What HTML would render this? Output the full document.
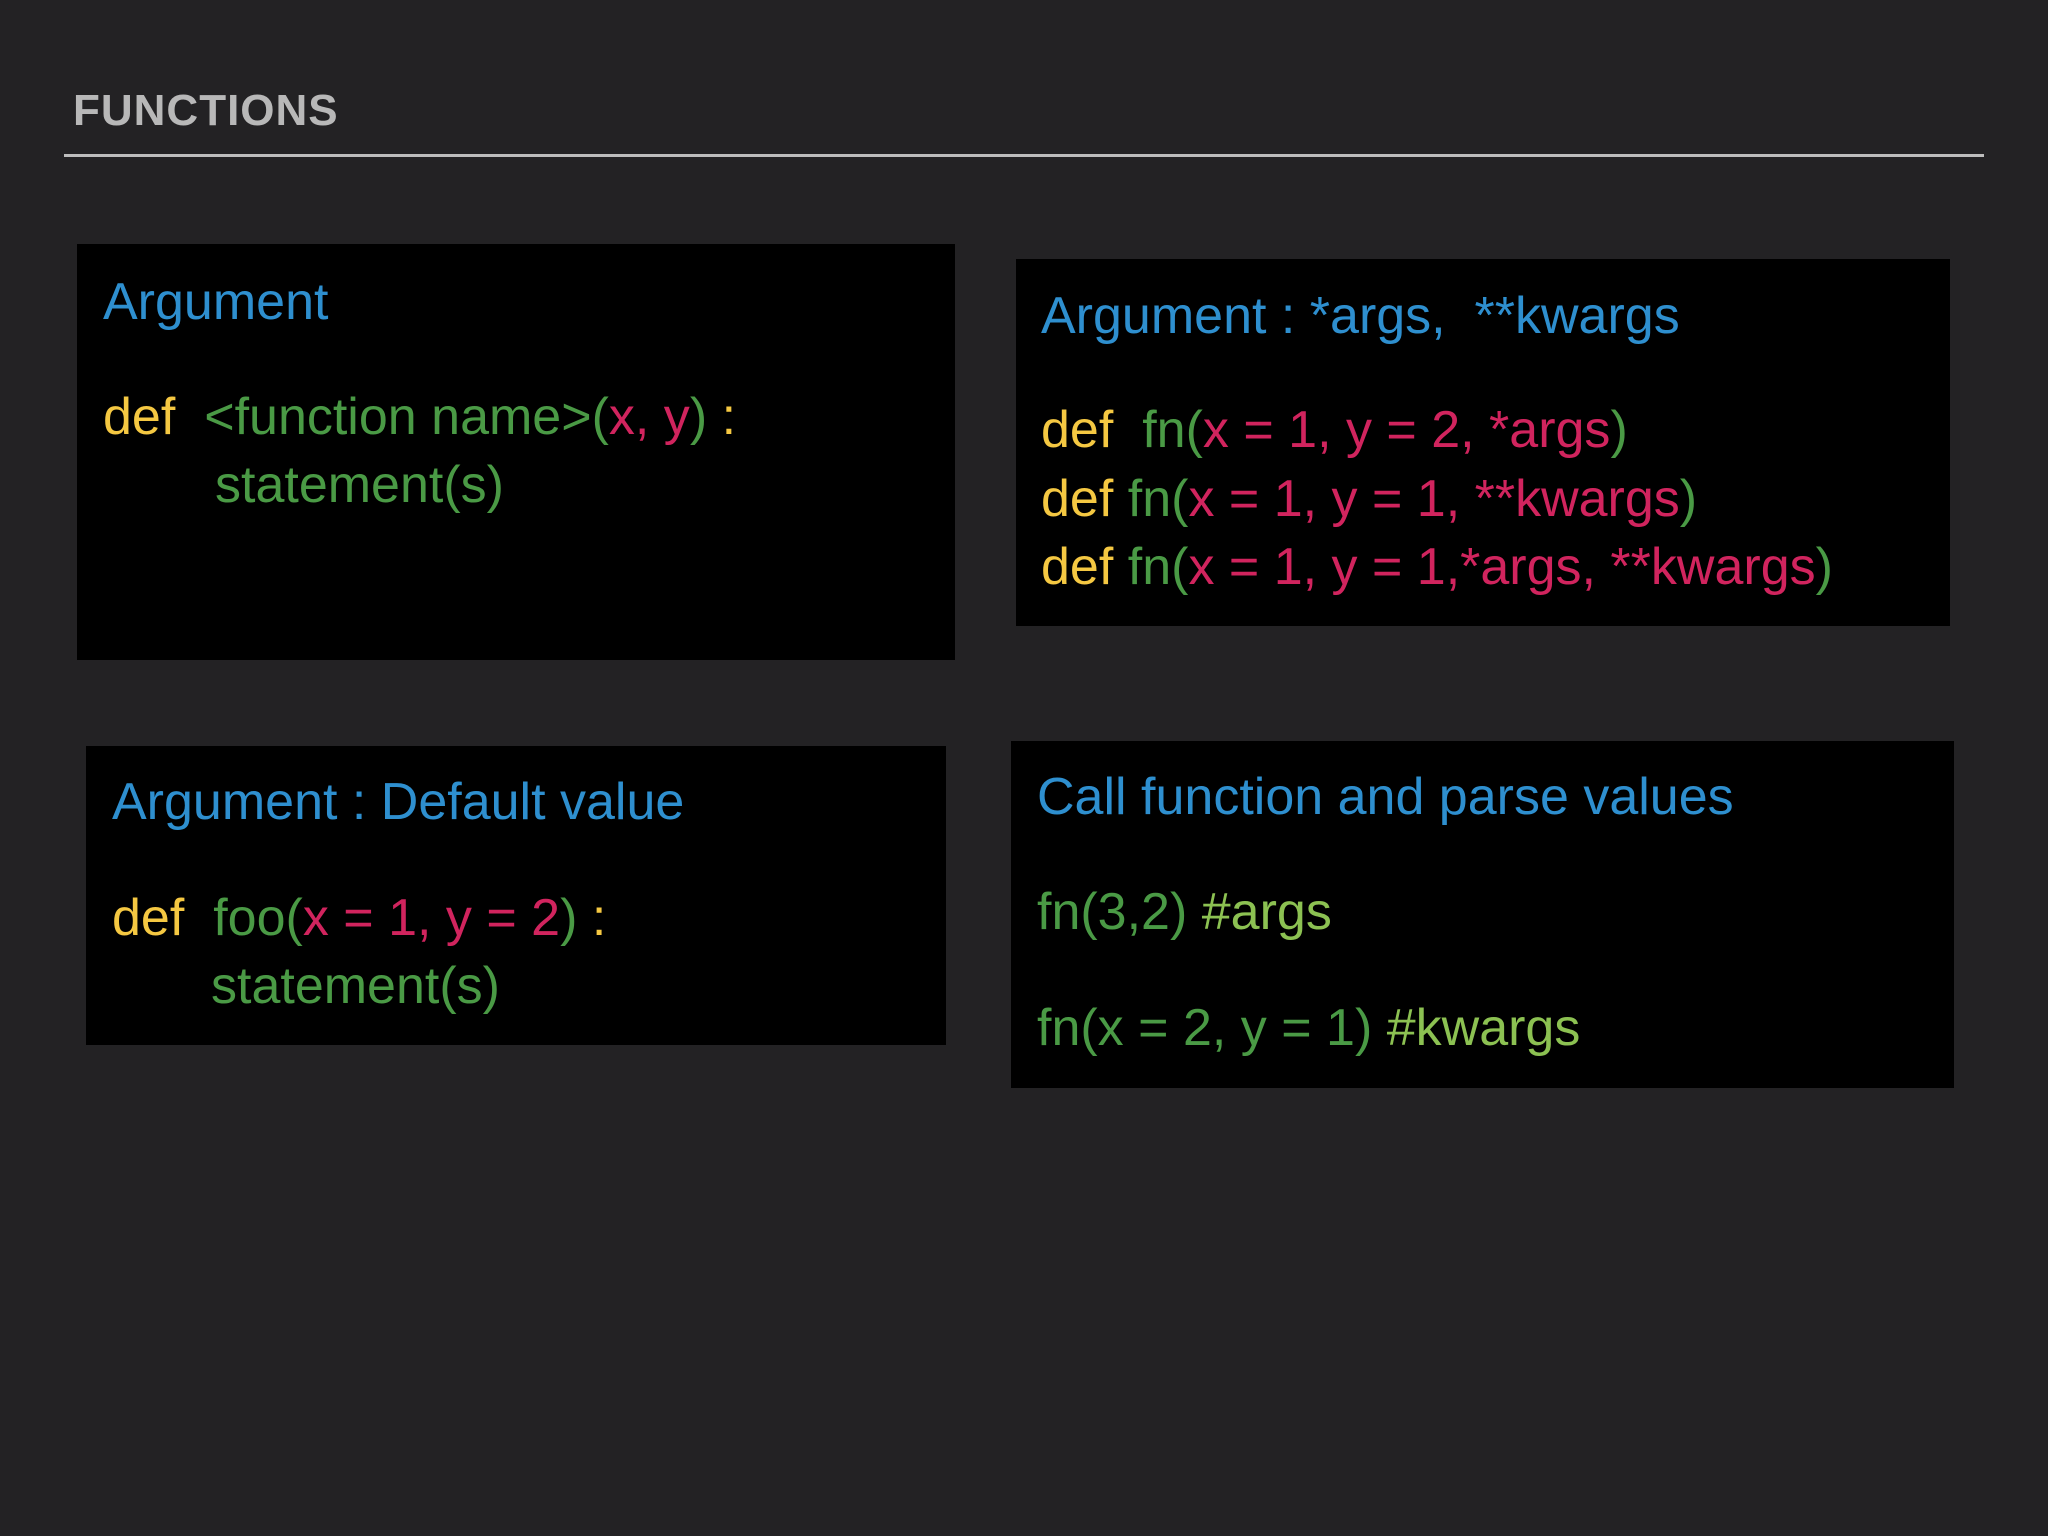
<!DOCTYPE html>
<html><head><meta charset="utf-8"><style>
body{margin:0;width:2048px;height:1536px;background:#232224;position:relative;overflow:hidden;font-family:"Liberation Sans",sans-serif;}
.t{position:absolute;white-space:pre;line-height:1;font-size:52px;letter-spacing:0px;}
.box{position:absolute;background:#000;}
.b{color:#2e8fcf}.y{color:#f5c842}.g{color:#4a9a45}.p{color:#d1245e}.lg{color:#8cc152}
</style></head><body>
<div class="t" style="left:73px;top:89px;font-size:44px;color:#b8b8b8;letter-spacing:1px;font-weight:bold">FUNCTIONS</div>
<div style="position:absolute;left:64px;top:154px;width:1920px;height:3px;background:#bdbdbd"></div>

<div class="box" style="left:77px;top:244px;width:878px;height:416px"></div>
<div class="t b" style="left:103px;top:276px">Argument</div>
<div class="t" style="left:103px;top:391px"><span class="y">def</span>  <span class="g">&lt;function name&gt;(</span><span class="p">x, y</span><span class="g">)</span> <span class="y">:</span></div>
<div class="t g" style="left:215px;top:459px">statement(s)</div>

<div class="box" style="left:1016px;top:259px;width:934px;height:367px"></div>
<div class="t b" style="left:1041px;top:290px">Argument : *args,  **kwargs</div>
<div class="t" style="left:1041px;top:404px"><span class="y">def</span>  <span class="g">fn(</span><span class="p">x = 1, y = 2, *args</span><span class="g">)</span></div>
<div class="t" style="left:1041px;top:473px"><span class="y">def</span> <span class="g">fn(</span><span class="p">x = 1, y = 1, **kwargs</span><span class="g">)</span></div>
<div class="t" style="left:1041px;top:541px"><span class="y">def</span> <span class="g">fn(</span><span class="p">x = 1, y = 1,*args, **kwargs</span><span class="g">)</span></div>

<div class="box" style="left:86px;top:746px;width:860px;height:299px"></div>
<div class="t b" style="left:112px;top:776px">Argument : Default value</div>
<div class="t" style="left:112px;top:892px"><span class="y">def</span>  <span class="g">foo(</span><span class="p">x = 1, y = 2</span><span class="g">)</span> <span class="y">:</span></div>
<div class="t g" style="left:211px;top:960px">statement(s)</div>

<div class="box" style="left:1011px;top:741px;width:943px;height:347px"></div>
<div class="t b" style="left:1037px;top:771px">Call function and parse values</div>
<div class="t" style="left:1037px;top:886px"><span class="g">fn(3,2)</span> <span class="lg">#args</span></div>
<div class="t" style="left:1037px;top:1002px"><span class="g">fn(x = 2, y = 1)</span> <span class="lg">#kwargs</span></div>
</body></html>
